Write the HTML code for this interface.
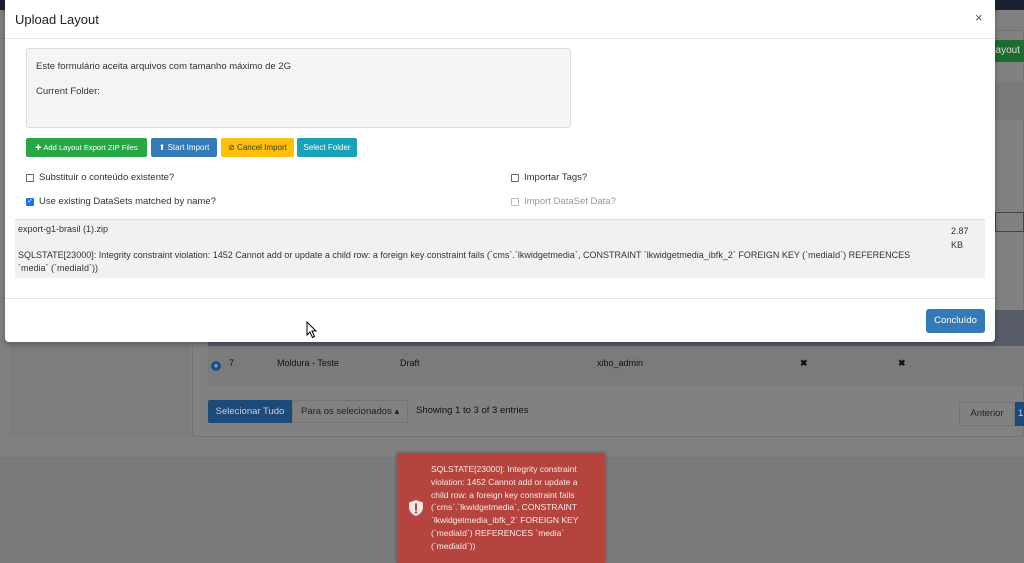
<!DOCTYPE html>
<html><head><meta charset="utf-8"><style>
*{box-sizing:border-box;margin:0;padding:0}
body{width:1024px;height:563px;overflow:hidden;background:#7a7a7a;font-family:"Liberation Sans",sans-serif;position:relative;font-size:10px;color:#212529}
.a{position:absolute}
.modal{left:5px;top:0;width:990px;height:342px;background:#fff;border-radius:0 0 4px 4px;box-shadow:0 2px 6px rgba(0,0,0,.3)}
.btn{position:absolute;top:138px;height:19px;font-size:8px;line-height:19px;color:#fff;padding:0 4px;border-radius:2px;white-space:nowrap;text-align:center;overflow:hidden}
.cb{position:absolute;font-size:9.5px;color:#333;display:flex;align-items:center;gap:5px}
.box{width:8px;height:8px;border:1px solid #666;border-radius:1px;background:#fff}
.pt{color:#111;font-size:9px}
</style></head><body>
<div class="a" style="left:0;top:0;width:1024px;height:10px;background:#1a2030"></div>
<div class="a" style="left:0;top:10px;width:1024px;height:448px;background:#808080;border-bottom:1px solid #777"></div>
<div class="a" style="left:10px;top:30px;width:180px;height:407px;background:#7d7d7d"></div>
<div class="a" style="left:192px;top:30px;width:832px;height:407px;background:#818181;border:1px solid #747474;border-radius:3px"></div>
<div class="a" style="left:990px;top:40px;width:34px;height:22px;background:#1d6b2f;color:#ddd;font-size:10px;line-height:22px">Layout</div>
<div class="a" style="left:208px;top:82px;width:816px;height:38px;background:#7a7a7a"></div>
<div class="a" style="left:995px;top:212px;width:29px;height:20px;border:1px solid #445;"></div>
<div class="a" style="left:208px;top:310px;width:816px;height:36px;background:#575c68"></div>
<div class="a" style="left:208px;top:346px;width:816px;height:40px;background:#7b7b7b"></div>
<div class="a" style="left:211px;top:361px;width:10px;height:10px;border-radius:50%;background:#1b4f8c;color:#ddd;font-size:9px;line-height:10px;text-align:center">+</div>
<div class="a pt" style="left:229px;top:358px">7</div>
<div class="a pt" style="left:277px;top:358px">Moldura - Teste</div>
<div class="a pt" style="left:400px;top:358px">Draft</div>
<div class="a pt" style="left:597px;top:358px">xibo_admin</div>
<div class="a pt" style="left:800px;top:358px;font-weight:bold">✖</div>
<div class="a pt" style="left:898px;top:358px;font-weight:bold">✖</div>
<div class="a" style="left:208px;top:400px;width:84px;height:23px;background:#1d4a78;color:#ccd;font-size:9.5px;line-height:23px;text-align:center;border-radius:2px 0 0 2px">Selecionar Tudo</div>
<div class="a" style="left:292px;top:400px;width:116px;height:23px;border:1px solid #747474;color:#222;font-size:9.5px;line-height:21px;padding-left:8px">Para os selecionados ▴</div>
<div class="a pt" style="left:416px;top:405px;font-size:9.5px">Showing 1 to 3 of 3 entries</div>
<div class="a" style="left:959px;top:402px;width:56px;height:24px;border:1px solid #747474;color:#222;font-size:9.5px;line-height:22px;text-align:center">Anterior</div>
<div class="a" style="left:1015px;top:402px;width:9px;height:24px;background:#1d4a78;color:#ccd;font-size:9.5px;line-height:24px;padding-left:3px">1</div>
<div class="a" style="left:397px;top:453px;width:208px;height:110px;background:#b5443e;box-shadow:0 0 4px rgba(0,0,0,.3)"></div>
<svg class="a" style="left:408px;top:499px" width="16" height="18" viewBox="0 0 16 18"><path d="M8 1L15 3.5V8C15 12.5 12 15.5 8 17 4 15.5 1 12.5 1 8V3.5Z" fill="#f4e6e5"/><rect x="7" y="4.5" width="2" height="7" fill="#b5443e"/><rect x="7" y="12.5" width="2" height="2" fill="#b5443e"/></svg>
<div class="a" style="left:431px;top:463px;width:160px;color:#fbe9e8;font-size:8.5px;line-height:12.8px">SQLSTATE[23000]: Integrity constraint violation: 1452 Cannot add or update a child row: a foreign key constraint fails (`cms`.`lkwidgetmedia`, CONSTRAINT `lkwidgetmedia_ibfk_2` FOREIGN KEY (`mediaId`) REFERENCES `media` (`mediaId`))</div>

<div class="a modal">
<div class="a" style="left:10px;top:12px;font-size:13px;color:#222">Upload Layout</div>
<div class="a" style="left:970px;top:10px;font-size:13px;color:#555">×</div>
<div class="a" style="left:0;top:38px;width:990px;height:1px;background:#e5e5e5"></div>
<div class="a" style="left:21px;top:48px;width:545px;height:80px;background:#f5f5f5;border:1px solid #ddd;border-radius:3px"></div>
<div class="a" style="left:31px;top:61px;font-size:9.5px;color:#333">Este formulário aceita arquivos com tamanho máximo de 2G</div>
<div class="a" style="left:31px;top:86px;font-size:9.5px;color:#333">Current Folder:</div>
<div class="btn" style="left:21px;width:121px;background:#28a745;font-size:7.6px">✚ Add Layout Export ZIP Files</div>
<div class="btn" style="left:146px;width:66px;background:#337ab7">⬆ Start Import</div>
<div class="btn" style="left:216px;width:73px;background:#ffc107;color:#333">⊘ Cancel Import</div>
<div class="btn" style="left:292px;width:60px;background:#17a2b8">Select Folder</div>
<div class="cb" style="left:21px;top:172px"><span class="box"></span>Substituir o conteúdo existente?</div>
<div class="cb" style="left:21px;top:196px"><span class="box" style="background:#1a73e8;border-color:#1a73e8;color:#fff;font-size:7px;line-height:6px;text-align:center">✓</span>Use existing DataSets matched by name?</div>
<div class="cb" style="left:506px;top:172px"><span class="box"></span>Importar Tags?</div>
<div class="cb" style="left:506px;top:196px;color:#999"><span class="box" style="border-color:#bbb"></span>Import DataSet Data?</div>
<div class="a" style="left:10px;top:219px;width:970px;height:59px;background:#f1f1f1;border-top:1px solid #ddd"></div>
<div class="a" style="left:13px;top:224px;font-size:9px;color:#333">export-g1-brasil (1).zip</div>
<div class="a" style="left:13px;top:249px;width:925px;font-size:9px;color:#333;line-height:13px">SQLSTATE[23000]: Integrity constraint violation: 1452 Cannot add or update a child row: a foreign key constraint fails (`cms`.`lkwidgetmedia`, CONSTRAINT `lkwidgetmedia_ibfk_2` FOREIGN KEY (`mediaId`) REFERENCES<br>`media` (`mediaId`))</div>
<div class="a" style="left:946px;top:224px;font-size:9px;color:#333;line-height:14px">2.87<br>KB</div>
<div class="a" style="left:0;top:298px;width:990px;height:1px;background:#e5e5e5"></div>
<div class="a" style="left:921px;top:309px;width:59px;height:24px;background:#337ab7;color:#fff;border-radius:3px;font-size:9.5px;line-height:24px;text-align:center">Concluído</div>
<svg class="a" style="left:301px;top:321px" width="12" height="18" viewBox="0 0 12 18"><path d="M1 1V14L4 11L6.5 16.5L8.5 15.5L6 10H10Z" fill="#fff" stroke="#000" stroke-width="1"/></svg>
</div>
</body></html>
